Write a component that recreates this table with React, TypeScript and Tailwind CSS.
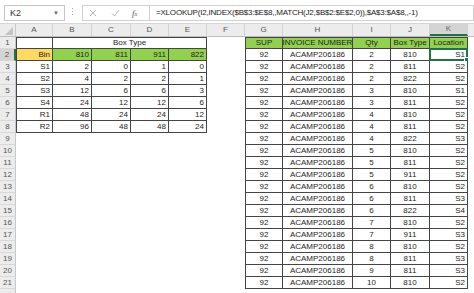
import React from 'react';

type Col = { key: string; w: string };

const COLS: Col[] = [
  { key: 'A', w: 'w-[37px]' },
  { key: 'B', w: 'w-[39px]' },
  { key: 'C', w: 'w-[39px]' },
  { key: 'D', w: 'w-[38px]' },
  { key: 'E', w: 'w-[38px]' },
  { key: 'F', w: 'w-[38px]' },
  { key: 'G', w: 'w-[38px]' },
  { key: 'H', w: 'w-[70px]' },
  { key: 'I', w: 'w-[38px]' },
  { key: 'J', w: 'w-[39px]' },
  { key: 'K', w: 'w-[38px]' },
  { key: 'L', w: 'w-[38px]' },
];

const BOX_TYPES = [810, 811, 911, 822];

const BINS: [string, number, number, number, number][] = [
  ['S1', 2, 0, 1, 0],
  ['S2', 4, 2, 2, 1],
  ['S3', 12, 6, 6, 3],
  ['S4', 24, 12, 12, 6],
  ['R1', 48, 24, 24, 12],
  ['R2', 96, 48, 48, 24],
];

const ORDERS: [number, number, string][] = [
  [2, 810, 'S1'],
  [2, 811, 'S2'],
  [2, 822, 'S2'],
  [3, 810, 'S1'],
  [3, 811, 'S2'],
  [4, 810, 'S2'],
  [4, 811, 'S2'],
  [4, 822, 'S3'],
  [5, 810, 'S2'],
  [5, 811, 'S2'],
  [5, 911, 'S2'],
  [6, 810, 'S2'],
  [6, 811, 'S3'],
  [6, 822, 'S4'],
  [7, 810, 'S2'],
  [7, 911, 'S3'],
  [8, 810, 'S2'],
  [8, 811, 'S3'],
  [9, 811, 'S3'],
  [10, 810, 'S2'],
];

const FORMULA = '=XLOOKUP(I2,INDEX($B$3:$E$8,,MATCH(J2,$B$2:$E$2,0)),$A$3:$A$8,,-1)';

const ROWS = Array.from({ length: 22 }, (_, i) => i + 1);

function Blank({ w }: { w: string }) {
  return <div className={`${w} h-full shrink-0`} />;
}

// one bordered cell of a table
function Cell({
  w,
  text,
  align = 'right',
  bg = '',
  first = false,
  top = false,
  children,
}: {
  w: string;
  text?: string | number;
  align?: 'left' | 'center' | 'right';
  bg?: string;
  first?: boolean;
  top?: boolean;
  children?: React.ReactNode;
}) {
  const justify = align === 'center' ? 'justify-center' : align === 'right' ? 'justify-end' : 'justify-start';
  return (
    <div
      className={`${w} ${bg} ${justify} relative h-full shrink-0 flex items-center px-[2px] border-r border-b border-[#454545] ${
        first ? 'border-l' : ''
      } ${top ? 'border-t' : ''} text-[#1e1e1e] whitespace-nowrap`}
    >
      {text}
      {children}
    </div>
  );
}

function LeftTable({ n }: { n: number }) {
  if (n > 8) {
    return (
      <>
        {COLS.slice(0, 5).map((c) => (
          <Blank key={c.key} w={c.w} />
        ))}
      </>
    );
  }
  if (n === 1) {
    return (
      <>
        <Cell w="w-[37px]" first top />
        <Cell w="w-[154px]" text="Box Type" align="center" top />
      </>
    );
  }
  if (n === 2) {
    return (
      <>
        <Cell w="w-[37px]" text="Bin" bg="bg-[#ffd966]" first />
        {BOX_TYPES.map((b, i) => (
          <Cell key={b} w={COLS[i + 1].w} text={b} bg="bg-[#92d050]" />
        ))}
      </>
    );
  }
  const row = BINS[n - 3];
  return (
    <>
      <Cell w="w-[37px]" text={row[0]} first />
      {row.slice(1).map((v, i) => (
        <Cell key={i} w={COLS[i + 1].w} text={v} />
      ))}
    </>
  );
}

function RightTable({ n }: { n: number }) {
  const cols = COLS.slice(6, 11);
  if (n > 21) {
    return (
      <>
        {cols.map((c) => (
          <Blank key={c.key} w={c.w} />
        ))}
      </>
    );
  }
  if (n === 1) {
    const heads = ['SUP', 'INVOICE NUMBER', 'Qty', 'Box Type', 'Location'];
    return (
      <>
        {cols.map((c, i) => (
          <Cell key={c.key} w={c.w} text={heads[i]} align="center" bg="bg-[#92d050]" first={i === 0} top />
        ))}
      </>
    );
  }
  const [qty, box, loc] = ORDERS[n - 2];
  return (
    <>
      <Cell w={cols[0].w} text={92} align="center" first />
      <Cell w={cols[1].w} text="ACAMP206186" align="center" />
      <Cell w={cols[2].w} text={qty} align="center" />
      <Cell w={cols[3].w} text={box} align="center" />
      <Cell w={cols[4].w} text={loc}>
        {n === 2 && (
          <div className="absolute -left-[1px] -top-[1px] w-[39px] h-[13px] border-2 border-[#217346]">
            <div className="absolute -right-[3px] -bottom-[3px] w-[5px] h-[5px] bg-[#217346] border border-white" />
          </div>
        )}
      </Cell>
    </>
  );
}

function FormulaBar() {
  return (
    <div className="h-[24px] flex items-start bg-white border-b border-[#d6d6d6]">
      {/* name box */}
      <div className="ml-[4px] mt-[5px] w-[61px] h-[16px] border border-[#c6c6c6] flex items-center justify-between px-[5px] text-[9px] text-[#333]">
        <span>K2</span>
        <span className="text-[6px] text-[#666]">▼</span>
      </div>
      {/* grip dots */}
      <div className="ml-[7px] mt-[8px] flex flex-col gap-[2px]">
        <div className="w-[1px] h-[1px] bg-[#a8a8a8]" />
        <div className="w-[1px] h-[1px] bg-[#a8a8a8]" />
        <div className="w-[1px] h-[1px] bg-[#a8a8a8]" />
      </div>
      <div className="ml-[9px] mt-[5px] flex-1 h-[16px] border border-[#d0d0d0] flex items-center">
        <div className="w-[67px] h-full flex items-center border-r border-[#d0d0d0]">
          <svg width="8" height="8" viewBox="0 0 8 8" className="ml-[6px]">
            <path d="M1 1 L7 7 M7 1 L1 7" stroke="#b5b5b5" strokeWidth="1" />
          </svg>
          <svg width="9" height="8" viewBox="0 0 9 8" className="ml-[14px]">
            <path d="M1 4.5 L3.5 7 L8 1" stroke="#b5b5b5" strokeWidth="1" fill="none" />
          </svg>
          <span className="ml-[12px] text-[9px] italic font-['Liberation_Serif',serif] text-[#555] leading-none">
            f<span className="text-[6px]">x</span>
          </span>
        </div>
        <div className="pl-[6px] text-[8px] tracking-[-0.2px] text-[#222] whitespace-nowrap">{FORMULA}</div>
      </div>
    </div>
  );
}

function ColumnHeader() {
  return (
    <div className="h-[13px] flex bg-[#ececec] border-b border-[#bdbdbd] text-[8px] text-[#555]">
      <div className="w-[16px] h-full shrink-0 relative border-r border-[#c8c8c8]">
        <svg width="8" height="8" viewBox="0 0 8 8" className="absolute right-[2px] bottom-[1px]">
          <path d="M8 0 L8 8 L0 8 Z" fill="#c4c4c4" />
        </svg>
      </div>
      {COLS.map((c) => (
        <div
          key={c.key}
          className={`${c.w} h-full shrink-0 flex items-center justify-center border-r border-[#d2d2d2] ${
            c.key === 'K' ? 'bg-[#d4d4d4] border-b-2 border-b-[#217346] text-[#666]' : ''
          }`}
        >
          {c.key === 'L' ? '' : c.key}
        </div>
      ))}
    </div>
  );
}

export default function App() {
  return (
    <div className="w-[474px] h-[293px] overflow-hidden bg-white font-['Liberation_Sans',Arial,sans-serif] text-[8px] leading-none">
      <FormulaBar />
      <ColumnHeader />
      {ROWS.map((n) => (
        <div key={n} className="h-[12px] flex">
          <div
            className={`w-[16px] h-full shrink-0 flex items-center justify-center border-b border-[#d8d8d8] text-[#555] ${
              n === 2 ? 'bg-[#d4d4d4] border-r-2 border-r-[#217346]' : 'bg-[#ececec] border-r border-r-[#c8c8c8]'
            }`}
          >
            {n < 22 ? n : ''}
          </div>
          <LeftTable n={n} />
          <Blank w="w-[38px]" />
          <RightTable n={n} />
          <Blank w="w-[38px]" />
        </div>
      ))}
    </div>
  );
}
